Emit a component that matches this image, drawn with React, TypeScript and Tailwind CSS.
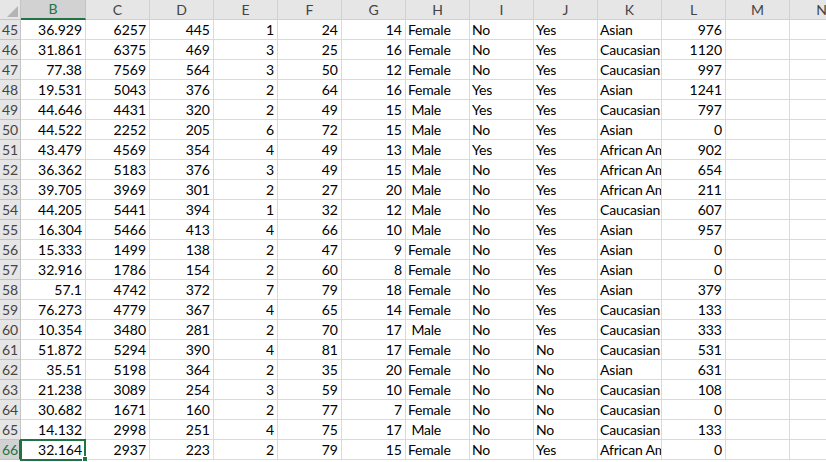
const columns = ["B", "C", "D", "E", "F", "G", "H", "I", "J", "K", "L", "M", "N"];

type Row = [number, string, string, string, string, string, string, string, string, string, string, string];

const rows: Row[] = [
  [45, "36.929", "6257", "445", "1", "24", "14", "Female", "No", "Yes", "Asian", "976"],
  [46, "31.861", "6375", "469", "3", "25", "16", "Female", "No", "Yes", "Caucasian", "1120"],
  [47, "77.38", "7569", "564", "3", "50", "12", "Female", "No", "Yes", "Caucasian", "997"],
  [48, "19.531", "5043", "376", "2", "64", "16", "Female", "Yes", "Yes", "Asian", "1241"],
  [49, "44.646", "4431", "320", "2", "49", "15", " Male", "Yes", "Yes", "Caucasian", "797"],
  [50, "44.522", "2252", "205", "6", "72", "15", " Male", "No", "Yes", "Asian", "0"],
  [51, "43.479", "4569", "354", "4", "49", "13", " Male", "Yes", "Yes", "African American", "902"],
  [52, "36.362", "5183", "376", "3", "49", "15", " Male", "No", "Yes", "African American", "654"],
  [53, "39.705", "3969", "301", "2", "27", "20", " Male", "No", "Yes", "African American", "211"],
  [54, "44.205", "5441", "394", "1", "32", "12", " Male", "No", "Yes", "Caucasian", "607"],
  [55, "16.304", "5466", "413", "4", "66", "10", " Male", "No", "Yes", "Asian", "957"],
  [56, "15.333", "1499", "138", "2", "47", "9", "Female", "No", "Yes", "Asian", "0"],
  [57, "32.916", "1786", "154", "2", "60", "8", "Female", "No", "Yes", "Asian", "0"],
  [58, "57.1", "4742", "372", "7", "79", "18", "Female", "No", "Yes", "Asian", "379"],
  [59, "76.273", "4779", "367", "4", "65", "14", "Female", "No", "Yes", "Caucasian", "133"],
  [60, "10.354", "3480", "281", "2", "70", "17", " Male", "No", "Yes", "Caucasian", "333"],
  [61, "51.872", "5294", "390", "4", "81", "17", "Female", "No", "No", "Caucasian", "531"],
  [62, "35.51", "5198", "364", "2", "35", "20", "Female", "No", "No", "Asian", "631"],
  [63, "21.238", "3089", "254", "3", "59", "10", "Female", "No", "No", "Caucasian", "108"],
  [64, "30.682", "1671", "160", "2", "77", "7", "Female", "No", "No", "Caucasian", "0"],
  [65, "14.132", "2998", "251", "4", "75", "17", " Male", "No", "No", "Caucasian", "133"],
  [66, "32.164", "2937", "223", "2", "79", "15", "Female", "No", "Yes", "African American", "0"],
];

// columns B..G and L are numbers (right aligned), H..K text
const numeric = [true, true, true, true, true, true, false, false, false, false, true];

function Cell({ value, right }: { value: string; right: boolean }) {
  return (
    <div
      className={`h-[20px] border-r border-b border-[#dadada] leading-[19px] whitespace-pre overflow-hidden ${
        right ? "text-right pr-[3px]" : "text-left pl-[2px] tracking-[-0.2px]"
      }`}
    >
      {value}
    </div>
  );
}

export default function App() {
  const selectedRow = 66;

  return (
    <div
      className="w-[826px] h-[462px] overflow-hidden bg-white text-[14px] text-black"
      style={{ fontFamily: "Lato, 'Open Sans', sans-serif" }}
    >
      <div className="grid grid-cols-[21px_65px_repeat(12,64px)] w-max">
        {/* header row */}
        <div className="h-[20px] bg-[#e6e6e6] border-r border-b border-[#c4c4c4] flex items-end justify-end p-[2px]">
          <svg width="11" height="11" viewBox="0 0 11 11">
            <polygon points="11,0 11,11 0,11" fill="#b4b4b4" />
          </svg>
        </div>
        {columns.map((c) =>
          c === "B" ? (
            <div
              key={c}
              className="h-[20px] bg-[#d2d2d2] border-r border-[#c4c4c4] border-b-2 border-b-[#217346] text-[#217346] text-center leading-[18px]"
            >
              {c}
            </div>
          ) : (
            <div
              key={c}
              className="h-[20px] bg-[#e6e6e6] border-r border-b border-[#d0d0d0] text-[#444] text-center leading-[19px]"
            >
              {c}
            </div>
          )
        )}

        {rows.map(([num, ...vals]) => (
          <div key={num} className="contents">
            {num === selectedRow ? (
              <div className="h-[20px] bg-[#d2d2d2] border-b border-[#c4c4c4] border-r-2 border-r-[#217346] text-[#217346] pl-[2px] leading-[19px]">
                {num}
              </div>
            ) : (
              <div className="h-[20px] bg-[#e6e6e6] border-r border-b border-[#c4c4c4] text-[#444] pl-[2px] leading-[19px]">
                {num}
              </div>
            )}
            {vals.map((v, i) =>
              num === selectedRow && i === 0 ? (
                <div key={i} className="relative h-[20px] border-b border-r border-[#dadada]">
                  <div className="absolute left-[-1px] top-[-1px] w-[66px] h-[22px] border-2 border-[#217346] text-right pr-[2px] leading-[18px]">
                    {v}
                  </div>
                  <div className="absolute right-[-3px] bottom-[-3px] w-[6px] h-[6px] bg-[#217346] border border-white" />
                </div>
              ) : (
                <Cell key={i} value={v} right={numeric[i]} />
              )
            )}
            <Cell value="" right={false} />
            <Cell value="" right={false} />
          </div>
        ))}
      </div>
    </div>
  );
}
